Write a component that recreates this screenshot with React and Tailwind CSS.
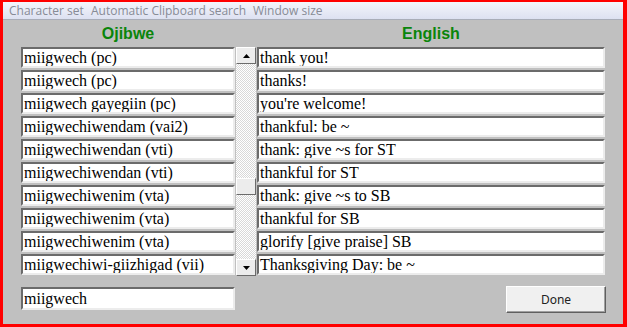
import React from 'react';

const rows = [
  ['miigwech (pc)', 'thank you!'],
  ['miigwech (pc)', 'thanks!'],
  ['miigwech gayegiin (pc)', "you're welcome!"],
  ['miigwechiwendam (vai2)', 'thankful: be ~'],
  ['miigwechiwendan (vti)', 'thank: give ~s for ST'],
  ['miigwechiwendan (vti)', 'thankful for ST'],
  ['miigwechiwenim (vta)', 'thank: give ~s to SB'],
  ['miigwechiwenim (vta)', 'thankful for SB'],
  ['miigwechiwenim (vta)', 'glorify [give praise] SB'],
  ['miigwechiwi-giizhigad (vii)', 'Thanksgiving Day: be ~'],
];

const box =
  "h-[21px] bg-white border-2 border-t-[#6b6b6b] border-l-[#6b6b6b] border-b-[#ececec] border-r-[#ececec] pl-[1px] text-[16px] leading-[17px] text-black font-['Liberation_Serif',serif] whitespace-nowrap overflow-hidden";

function ScrollButton({ up }) {
  return (
    <div className="h-[17px] bg-[#ececec] border border-t-white border-l-white border-b-[#6b6b6b] border-r-[#6b6b6b] flex items-center justify-center">
      <svg width="7" height="4" viewBox="0 0 7 4">
        {up ? <polygon points="3.5,0 7,4 0,4" fill="#000" /> : <polygon points="0,0 7,0 3.5,4" fill="#000" />}
      </svg>
    </div>
  );
}

const track =
  "bg-[repeating-conic-gradient(#ffffff_0%_25%,#d8d8d8_0%_50%)] bg-size-[2px_2px]";

export default function App() {
  return (
    <div className="w-[627px] h-[327px] bg-[#c0c0c0] border-l-[3px] border-t-[2px] border-r-[4px] border-b-[3px] border-[#ff0000] flex flex-col font-['Liberation_Sans',sans-serif]">
      {/* menu bar */}
      <div className="h-[18px] shrink-0 bg-gradient-to-b from-[#f4f5fb] to-[#dde1f1] border-b border-[#a9adb8] flex items-center pl-[6px] text-[12px] text-[#878b96] font-['Open_Sans',sans-serif]">
        <span className="w-[82px]">Character set</span>
        <span className="w-[162px]">Automatic Clipboard search</span>
        <span>Window size</span>
      </div>

      <div className="pl-[18px] grid grid-cols-[214px_20px_348px] gap-x-[1px]">
        <div className="h-[27px] flex items-center justify-center text-[16px] font-bold text-[#0a850a]">Ojibwe</div>
        <div />
        <div className="h-[27px] flex items-center justify-center text-[16px] font-bold text-[#0a850a]">English</div>

        <div className="flex flex-col gap-[2px]">
          {rows.map((r, i) => (
            <div key={i} className={box}>{r[0]}</div>
          ))}
        </div>

        <div className="h-[229px] flex flex-col">
          <ScrollButton up />
          <div className={`h-[114px] ${track}`} />
          <div className="h-[17px] bg-[#ececec] border border-t-white border-l-white border-b-[#6b6b6b] border-r-[#6b6b6b]" />
          <div className={`flex-1 ${track}`} />
          <ScrollButton />
        </div>

        <div className="flex flex-col gap-[2px]">
          {rows.map((r, i) => (
            <div key={i} className={box}>{r[1]}</div>
          ))}
        </div>
      </div>

      <div className="pl-[18px] pr-[17px] mt-[10px] flex items-start justify-between">
        <div className={`${box} w-[214px] h-[23px] mt-[1px] leading-[19px]`}>miigwech</div>
        <button className="w-[100px] h-[27px] bg-[#f0f0f0] border border-t-white border-l-white border-b-[#5f5f5f] border-r-[#5f5f5f] shadow-[inset_-1px_-1px_0_#a0a0a0] text-[12px] text-[#222] font-['Noto_Sans',sans-serif]">
          Done
        </button>
      </div>
    </div>
  );
}
